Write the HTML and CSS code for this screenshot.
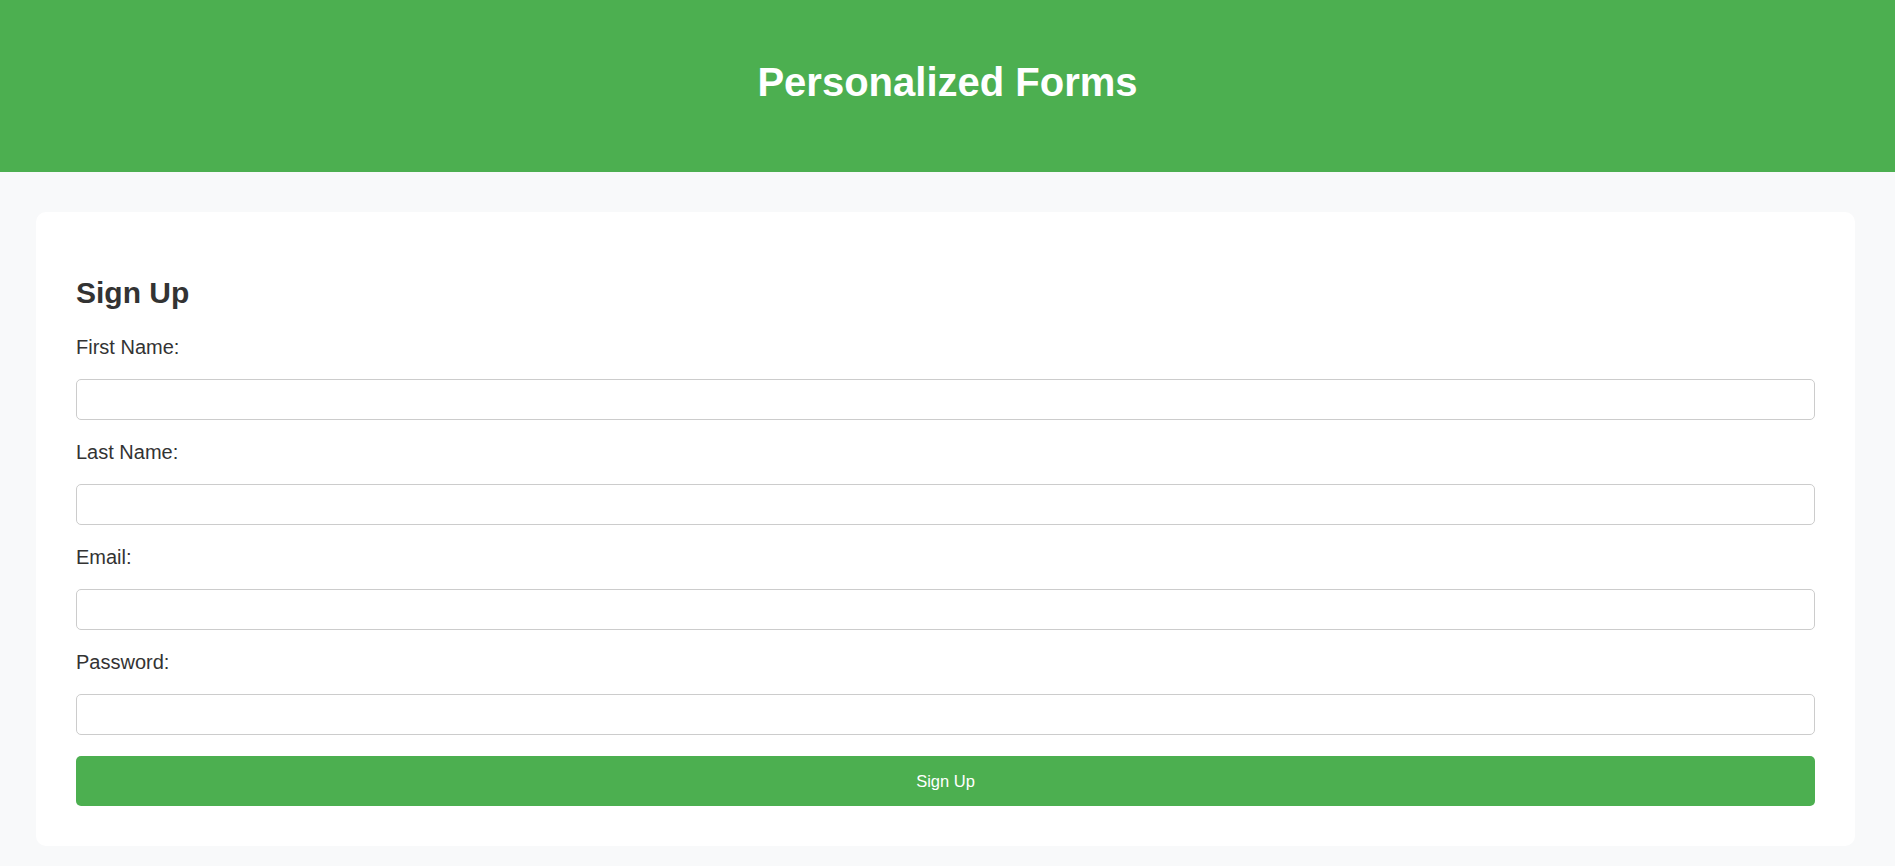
FILE: index.html
```html
<!DOCTYPE html>
<html lang="en">
<head>
<meta charset="utf-8">
<title>Personalized Forms</title>
<link rel="stylesheet" href="styles.css">
</head>
<body>
  <header class="site-header">
    <h1 class="site-title">Personalized Forms</h1>
  </header>
  <main class="page">
    <section class="card">
      <h2 class="card-title">Sign Up</h2>
      <form class="signup-form" onsubmit="return false;">
        <div class="field">
          <label class="field-label" for="first-name">First Name:</label>
          <input class="field-input" type="text" id="first-name" name="firstName">
        </div>
        <div class="field">
          <label class="field-label" for="last-name">Last Name:</label>
          <input class="field-input" type="text" id="last-name" name="lastName">
        </div>
        <div class="field">
          <label class="field-label" for="email">Email:</label>
          <input class="field-input" type="email" id="email" name="email">
        </div>
        <div class="field">
          <label class="field-label" for="password">Password:</label>
          <input class="field-input" type="password" id="password" name="password">
        </div>
        <button class="submit-btn" type="submit">Sign Up</button>
      </form>
    </section>
  </main>
</body>
</html>
```

FILE: styles.css
```css
* {
  box-sizing: border-box;
}

html, body {
  margin: 0;
  padding: 0;
}

body {
  font-family: "Liberation Sans", Arial, Helvetica, sans-serif;
  background: #f8f9fa;
  color: #333333;
  min-height: 100vh;
}

/* Top banner */
.site-header {
  background: #4caf50;
  height: 172px;
  padding-top: 59px;
  text-align: center;
}

.site-title {
  margin: 0;
  color: #ffffff;
  font-size: 40px;
  line-height: 46px;
  font-weight: bold;
}

/* Content area */
.page {
  padding: 40px 40px 0 36px;
}

.card {
  background: #ffffff;
  border-radius: 10px;
  padding: 40px;
}

.card-title {
  margin: 24px 0 25px;
  font-size: 30px;
  line-height: 34.5px;
  font-weight: bold;
  color: #333333;
}

.signup-form {
  display: flex;
  flex-direction: column;
  gap: 20.8px;
}

.field {
  display: flex;
  flex-direction: column;
  gap: 20.4px;
}

.field-label {
  font-size: 20px;
  line-height: 23px;
  color: #333333;
}

.field-input {
  display: block;
  width: 100%;
  height: 41px;
  margin: 0;
  padding: 0 12px;
  border: 1px solid #cccccc;
  border-radius: 5px;
  background: #ffffff;
  font-family: inherit;
  font-size: 19.2px;
  color: #333333;
  outline: none;
}

.submit-btn {
  display: block;
  width: 100%;
  height: 50px;
  margin: 0;
  padding: 0;
  border: none;
  border-radius: 5px;
  background: #4caf50;
  color: #ffffff;
  font-family: inherit;
  font-size: 16.5px;
  cursor: pointer;
}
```
